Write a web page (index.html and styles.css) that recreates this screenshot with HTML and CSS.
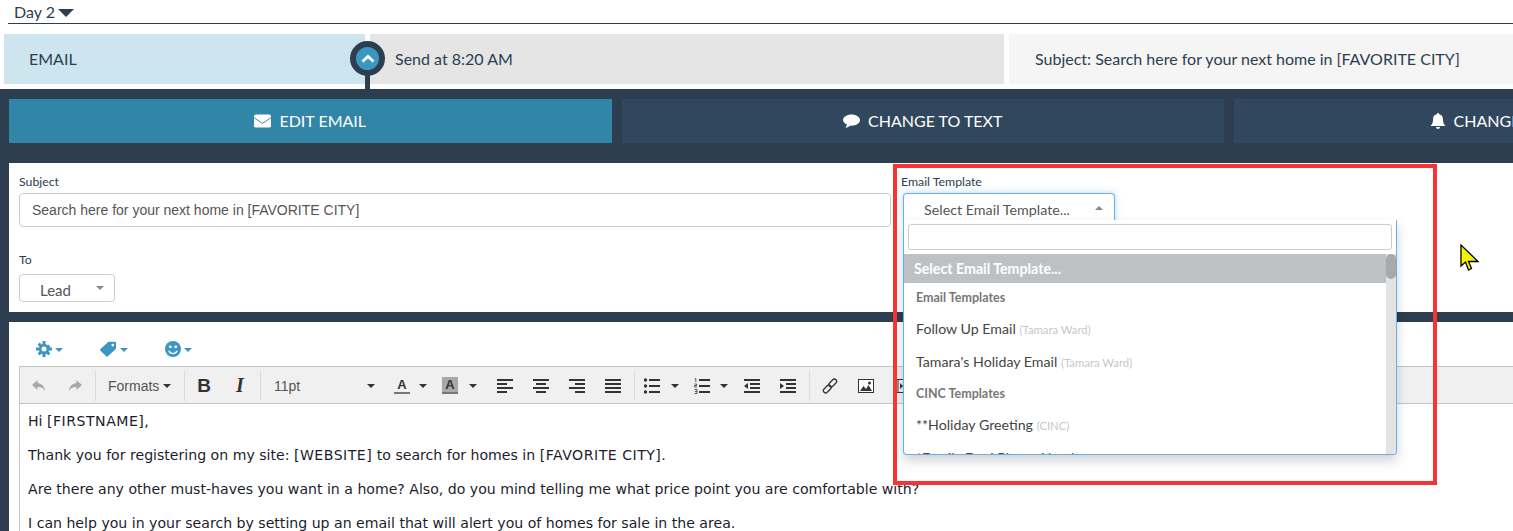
FILE: index.html
```html
<!DOCTYPE html>
<html lang="en">
<head>
<meta charset="utf-8">
<title>Email step</title>
<link rel="stylesheet" href="styles.css">
</head>
<body>
<div class="page">
  <div class="day"><span>Day 2</span><i class="day-caret"></i></div>
  <div class="step">
    <div class="cell cell-type">EMAIL</div>
    <div class="cell cell-time">Send at 8:20 AM</div>
    <div class="cell cell-subject">Subject: Search here for your next home in [FAVORITE CITY]</div>
    <div class="knob"><svg viewBox="0 0 16 16" width="16" height="16"><path d="M2.500 10.500 8 5.500l5.500 5" fill="none" stroke="#fff" stroke-width="3"/></svg></div>
    <div class="stem"></div>
  </div>
  <div class="panel">
    <div class="tabs">
      <div class="tab tab-on"><svg class="tab-ico" viewBox="0 0 18 14" width="17" height="14"><rect width="18" height="14" rx="2" fill="#fff"/><path d="M0 3.500 9 9.500l9-6" fill="none" stroke="#3185a7" stroke-width="1"/></svg>EDIT EMAIL</div>
      <div class="tab"><svg class="tab-ico" viewBox="0 0 18 14" width="17" height="14"><path d="M9 0c5 0 9 2.600 9 6s-4 6-9 6l-1.500-.1C6 13.200 4.500 13.800 2.500 14c1-1 1.600-2 1.800-3.200C1.700 9.800 0 8 0 6c0-3.400 4-6 9-6z" fill="#fff"/></svg>CHANGE TO TEXT</div>
      <div class="tab"><svg class="tab-ico" viewBox="0 0 16 16" width="16" height="16"><path d="M8 0a1.200 1.200 0 0 1 1.200 1.300C12 1.800 13 4 13 6.500c0 3.500 1 5 2.500 6.500H.5C2 11.500 3 10 3 6.500 3 4 4 1.800 6.800 1.300A1.200 1.200 0 0 1 8 0zM6 14h4a2 2 0 0 1-4 0z" fill="#fff"/></svg>CHANGE TO REMINDERS</div>
    </div>
    <div class="form">
      <div class="form-col form-left">
        <label class="lbl">Subject</label>
        <div class="input">Search here for your next home in [FAVORITE CITY]</div>
        <label class="lbl lbl-to">To</label>
        <div class="select-lead"><span>Lead</span><i class="mini-caret"></i></div>
      </div>
      <div class="form-col form-right">
        <label class="lbl">Email Template</label>
        <div class="select-open"><span>Select Email Template...</span><i class="mini-caret mini-up"></i></div>
      </div>
    </div>
    <div class="editor">
      <div class="tools">
        <span class="tool">
          <svg viewBox="0 0 16 16" width="16" height="16"><g fill="#3b97bf"><circle cx="8" cy="8" r="5.200"/><path d="M6.500 0h3v3h-3zM6.500 13h3v3h-3zM0 6.500h3v3H0zM13 6.500h3v3h-3z"/><path d="M1.600 3.700 3.700 1.600l2 2-2.100 2.100zM10.300 5.700l2-2.100 2.100 2.100-2 2zM3.600 10.300l2.100 2-2 2.100-2.100-2.100zM12.300 10.300l2.100 2-2.100 2.100-2-2z"/></g><circle cx="8" cy="8" r="2.500" fill="#fff"/></svg>
          <i class="blue-caret"></i>
        </span>
        <span class="tool tool-tag">
          <svg viewBox="0 0 18 16.500" width="18" height="18"><path d="M9.500 1H16a1 1 0 0 1 1 1v6L9 15.600a1.300 1.300 0 0 1-1.800 0L1.500 10a1.300 1.300 0 0 1 0-1.800z" fill="#3b97bf"/><circle cx="13.800" cy="4.300" r="1.400" fill="#fff"/></svg>
          <i class="blue-caret"></i>
        </span>
        <span class="tool tool-smile">
          <svg viewBox="0 0 16 16" width="16" height="16"><circle cx="8" cy="8" r="8" fill="#3b97bf"/><circle cx="5.300" cy="5.800" r="1.400" fill="#fff"/><circle cx="10.700" cy="5.800" r="1.400" fill="#fff"/><path d="M3.800 9.800c1 2 2.500 2.800 4.200 2.800s3.200-.8 4.200-2.800" fill="none" stroke="#fff" stroke-width="1.400"/></svg>
          <i class="blue-caret"></i>
        </span>
      </div>
      <div class="mce">
        <div class="bar">
          <div class="grp grp-hist">
            <span class="btn"><svg viewBox="0 0 16 16" width="16" height="16"><path d="M6.500 2 1 7l5.500 5V9c3.500 0 6 .8 7.500 4.500C14 9 11 5.500 6.500 5z" fill="#a8a8a8"/></svg></span>
            <span class="btn"><svg viewBox="0 0 16 16" width="16" height="16"><path d="M9.500 2 15 7l-5.500 5V9C6 9 3.500 9.800 2 13.500 2 9 5 5.500 9.500 5z" fill="#a8a8a8"/></svg></span>
          </div>
          <div class="grp grp-formats"><span class="txt">Formats</span><i class="caret"></i></div>
          <div class="grp grp-style">
            <span class="btn btn-b">B</span>
            <span class="btn btn-i">I</span>
          </div>
          <div class="grp grp-size"><span class="txt">11pt</span><i class="caret"></i></div>
          <div class="color color-a"><span class="a a-line">A</span><i class="caret"></i></div>
          <div class="color color-b"><span class="a a-fill">A</span><i class="caret"></i></div>
          <div class="grp grp-align">
            <span class="btn"><svg viewBox="0 0 16 16" width="16" height="16"><path class="ln" d="M0 2h16M0 6h10M0 10h16M0 14h10"/></svg></span>
            <span class="btn"><svg viewBox="0 0 16 16" width="16" height="16"><path class="ln" d="M0 2h16M3 6h10M0 10h16M3 14h10"/></svg></span>
            <span class="btn"><svg viewBox="0 0 16 16" width="16" height="16"><path class="ln" d="M0 2h16M6 6h10M0 10h16M6 14h10"/></svg></span>
            <span class="btn"><svg viewBox="0 0 16 16" width="16" height="16"><path class="ln" d="M0 2h16M0 6h16M0 10h16M0 14h16"/></svg></span>
          </div>
          <div class="grp grp-lists">
            <span class="btn btn-list"><svg viewBox="0 0 16 16" width="16" height="16"><path class="ln" d="M5 2h11M5 8h11M5 14h11"/><circle cx="1.500" cy="2" r="1.700" fill="#333"/><circle cx="1.500" cy="8" r="1.700" fill="#333"/><circle cx="1.500" cy="14" r="1.700" fill="#333"/></svg><i class="caret"></i></span>
            <span class="btn btn-list"><svg viewBox="0 0 16 16" width="16" height="16"><path class="ln" d="M5 2h11M5 8h11M5 14h11"/><path class="thin" d="M.800 1 1.800.5V4M.500 6h2.200v1.500H.500V9h2.500M.500 11.500h2.500v4H.500M1 13.500h2"/></svg><i class="caret"></i></span>
            <span class="btn"><svg viewBox="0 0 16 16" width="16" height="16"><path class="ln" d="M0 2h16M6 6h10M6 10h10M0 14h16"/><path d="M4 5v6L0 8z" fill="#333"/></svg></span>
            <span class="btn"><svg viewBox="0 0 16 16" width="16" height="16"><path class="ln" d="M0 2h16M6 6h10M6 10h10M0 14h16"/><path d="M0 5v6l4-3z" fill="#333"/></svg></span>
          </div>
          <div class="grp grp-insert">
            <span class="btn"><svg viewBox="0 0 16 16" width="16" height="16"><g fill="none" stroke="#333" stroke-width="1.300"><rect x="8.500" y=".5" width="4.500" height="9" rx="2.250" transform="rotate(45 10.750 5)"/><rect x="3" y="6.500" width="4.500" height="9" rx="2.250" transform="rotate(45 5.250 11)"/></g></svg></span>
            <span class="btn"><svg viewBox="0 0 16 16" width="16" height="16"><rect x=".5" y="1.500" width="15" height="13" fill="#fff" stroke="#333"/><path d="M2 13l3.500-5 2.500 3 2.500-4L14 13z" fill="#333"/><circle cx="11.500" cy="5" r="1.500" fill="#333"/></svg></span>
            <span class="btn"><svg viewBox="0 0 16 16" width="16" height="16"><rect x=".5" y="1.500" width="15" height="13" fill="none" stroke="#333"/><path d="M4 1.500v13M12 1.500v13" stroke="#333"/><path d="M6 5v6l3-3zM10 5v6l-2-3z" fill="#333"/></svg></span>
          </div>
        </div>
        <div class="body">
          <p>Hi <span class="tok">[FIRSTNAME]</span>,</p>
          <p>Thank you for registering on my site: <span class="tok">[WEBSITE]</span> to search for homes in <span class="tok">[FAVORITE CITY]</span>.</p>
          <p>Are there any other must-haves you want in a home? Also, do you mind telling me what price point you are comfortable with?</p>
          <p>I can help you in your search by setting up an email that will alert you of homes for sale in the area.</p>
        </div>
      </div>
    </div>
  </div>

  <div class="dropdown">
    <div class="search"></div>
    <div class="results">
      <div class="list">
        <div class="opt opt-sel">Select Email Template...</div>
        <div class="group">Email Templates</div>
        <div class="opt">Follow Up Email <small>(Tamara Ward)</small></div>
        <div class="opt">Tamara's Holiday Email <small>(Tamara Ward)</small></div>
        <div class="group">CINC Templates</div>
        <div class="opt">**Holiday Greeting <small>(CINC)</small></div>
        <div class="opt">*Family Deal Phone Number <small>(CINC)</small></div>
      </div>
      <div class="scroll"><div class="thumb"></div></div>
    </div>
  </div>
  <div class="redbox"></div>
  <svg class="cursor" viewBox="0 0 20 28" width="20" height="28"><path d="M1 1v21l4.500-4 3 8 3-1.500-3-7H18z" fill="#f5f500" stroke="#000" stroke-width="1.300"/></svg>
</div>
</body>
</html>
```
FILE: styles.css
```css
* { box-sizing: border-box; }
html, body { margin: 0; padding: 0; background: #fff; }
.page { position: relative; width: 1513px; height: 531px; overflow: hidden; font-family: Lato, "Noto Sans", sans-serif; color: #2c3e50; }

.day { height: 24px; margin-left: 8px; padding-left: 6px; border-bottom: 1px solid #2c3e50; font-size: 16px; line-height: 23px; display: flex; align-items: center; gap: 3px; }
.day-caret { width: 0; height: 0; border-left: 8px solid transparent; border-right: 8px solid transparent; border-top: 8px solid #2c3e50; margin-top: 2px; }

.step { position: relative; display: flex; gap: 5px; height: 50px; margin: 10px 0 5px 4px; font-size: 16px; }
.cell { display: flex; align-items: center; color: #2c3e50; padding-bottom: 2px; }
.cell-type { width: 361px; background: #cce5ef; padding-left: 25px; }
.cell-time { width: 634px; background: #e5e5e5; padding-left: 25px; }
.cell-subject { flex: 1; background: #f5f5f5; padding-left: 26px; }
.knob { position: absolute; left: 346px; top: 7px; width: 35px; height: 35px; border-radius: 50%; background: #3b97bf; border: 6px solid #2c3e50; display: flex; align-items: center; justify-content: center; }
.stem { position: absolute; left: 361px; top: 40px; width: 5px; height: 16px; background: #2c3e50; }

.panel { background: #2c3e50; height: 442px; padding: 10px 0 0 9px; overflow: hidden; }
.tabs { display: flex; gap: 10px; height: 44px; }
.tab { flex: 0 0 602.500px; background: #30475e; color: #fff; font-size: 16px; display: flex; align-items: center; justify-content: center; gap: 8px; padding-bottom: 2px; }
.tab-on { background: #3185a7; }
.tab-ico { margin-top: 2px; }

.form { display: flex; background: #fff; height: 149px; margin-top: 20px; padding: 12px 0 0 10px; }
.form-left { width: 882px; }
.lbl { display: block; font-size: 12.300px; line-height: 14px; color: #2c3e50; }
.input { width: 872px; height: 34px; margin-top: 4px; border: 1px solid #ccc; border-radius: 4px; padding-left: 12px; font: 14px/32px "Liberation Sans", Arial, sans-serif; color: #555; }
.lbl-to { margin-top: 26px; }
.select-lead { position: relative; width: 96px; height: 28px; margin-top: 7px; border: 1px solid #ccc; border-radius: 4px; font-size: 15px; color: #555; padding: 6px 0 0 20px; line-height: 18px; }
.mini-caret { position: absolute; right: 10px; top: 11px; width: 0; height: 0; border-left: 4px solid transparent; border-right: 4px solid transparent; border-top: 4px solid #888; }
.mini-up { border-top: 0; border-bottom: 4px solid #888; top: 12px; right: 11px; }
.form-right { width: 230px; }
.select-open { position: relative; width: 212px; height: 30px; margin: 4px 0 0 2px; border: 1px solid #66afe9; border-bottom: 0; border-radius: 4px 4px 0 0; box-shadow: 0 0 6px rgba(102,175,233,.5); font-size: 14.300px; line-height: 32px; padding-left: 20px; color: #555; }

.editor { background: #fff; height: 300px; margin-top: 10px; padding: 0 0 0 10px; }
.tools { display: flex; height: 44px; padding: 19px 0 0 17px; }
.tool { display: flex; align-items: center; height: 16px; width: 63px; gap: 3px; }
.tool-tag { width: 66px; }
.blue-caret { width: 0; height: 0; border-left: 4px solid transparent; border-right: 4px solid transparent; border-top: 4px solid #3b97bf; margin-top: 1px; }

.mce { border: 1px solid #c5c5c5; border-right: 0; height: 260px; }
.bar { display: flex; height: 37px; padding-top: 1px; background: #f0f0f0; border-bottom: 1px solid #c5c5c5; align-items: center; color: #333; }
.grp { display: flex; align-items: center; height: 30px; position: relative; }
.grp + .grp { border-left: 1px solid #d9d9d9; }
.btn { display: flex; align-items: center; justify-content: center; width: 36px; height: 30px; }
.ln { fill: none; stroke: #333; stroke-width: 2; }
.thin { fill: none; stroke: #333; stroke-width: .8; }
.caret { display: block; width: 0; height: 0; border-left: 4px solid transparent; border-right: 4px solid transparent; border-top: 4px solid #333; }
.txt { font: 14px/18px "Liberation Sans", Arial, sans-serif; color: #555; }
.grp-hist { width: 75px; padding-left: 1px; }
.grp-formats { width: 89px; padding-left: 12px; gap: 4px; }
.grp-style { width: 76px; padding-left: 1px; }
.btn-b { font: bold 19px "Liberation Sans", Arial, sans-serif; color: #333; }
.btn-i { font: italic bold 20px "Liberation Serif", serif; color: #333; }
.grp-size { width: 116px; padding-left: 13px; justify-content: space-between; padding-right: 1px; }
.color { display: flex; align-items: center; height: 30px; }
.color-a { width: 58px; padding-left: 18px; gap: 9px; }
.color-b { width: 51px; gap: 11px; padding-left: 8px; }
.a { display: block; width: 16px; height: 17px; font: bold 13px/15px "Liberation Sans", Arial, sans-serif; text-align: center; color: #333; border-bottom: 2px solid #777; }
.a-fill { background: #a8a8a8; }
.grp-align { width: 149px; padding-left: 2px; }
.grp-lists { width: 175px; }
.btn-list { width: 49.500px; gap: 10.500px; justify-content: flex-start; padding-left: 9px; }
.grp-insert { padding-left: 2px; }

.body { padding: 8px 0 0 8px; font: 14.100px/18px "DejaVu Sans", Verdana, sans-serif; color: #1c1c2c; white-space: nowrap; }
.body p { margin: 0 0 16px; }
.tok { letter-spacing: .5px; }

.dropdown { position: absolute; left: 903px; top: 220px; width: 494px; height: 235px; background: #fff; border: 1px solid #66afe9; border-top: 0; border-radius: 0 0 4px 4px; box-shadow: 0 6px 12px rgba(0,0,0,.18); overflow: hidden; }
.search { height: 26px; margin: 4px; border: 1px solid #ccc; border-radius: 3px; }
.results { display: flex; height: 201px; }
.list { flex: 1; font-size: 14.200px; color: #444; overflow: hidden; }
.opt { height: 33px; padding-left: 12px; line-height: 31px; white-space: nowrap; }
.opt-sel { height: 29px; line-height: 30px; background: #bdc1c4; color: #fff; font-weight: 700; padding-left: 10px; }
.group { height: 30px; padding-left: 12px; line-height: 30px; font-size: 12.500px; font-weight: 700; color: #777; }
.opt small { font-size: 11.300px; color: #c4c8cc; }
.scroll { width: 10px; background: #e3e3e3; }
.thumb { width: 10px; height: 25px; border-radius: 5px; background: #a9a9a9; }

.redbox { position: absolute; left: 893px; top: 164px; width: 544px; height: 321px; border: 4px solid #f83333; pointer-events: none; }
.cursor { position: absolute; left: 1460px; top: 244px; }
```
